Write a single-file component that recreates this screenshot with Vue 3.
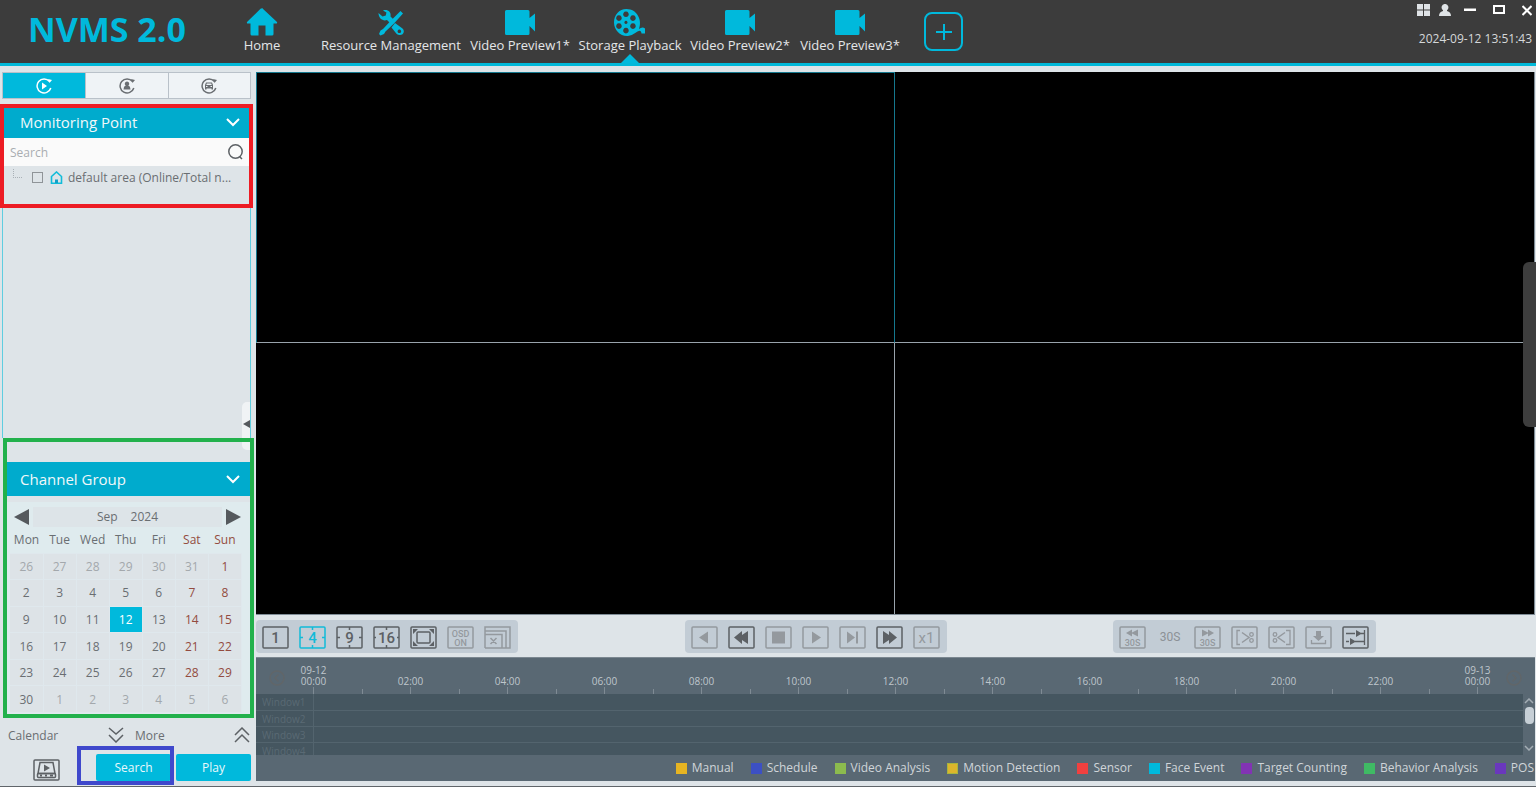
<script setup>
import { ref } from 'vue'

const previews = [
  { label: 'Video Preview1*', icon: 'camera' },
  { label: 'Storage Playback', icon: 'reel' },
  { label: 'Video Preview2*', icon: 'camera' },
  { label: 'Video Preview3*', icon: 'camera' },
]
const weekdays = ['Mon', 'Tue', 'Wed', 'Thu', 'Fri', 'Sat', 'Sun']
const selected = ref(12)
const weeks = Array.from({ length: 6 }, (_, w) =>
  Array.from({ length: 7 }, (_, d) => {
    const n = w * 7 + d - 5
    if (n < 1) return { day: n + 31, other: true }
    if (n > 30) return { day: n - 30, other: true }
    return { day: n, other: false }
  })
)
const ticks = Array.from({ length: 25 }, (_, h) => ({
  major: h % 2 === 0,
  date: h === 0 ? '09-12' : h === 24 ? '09-13' : '',
  label: h % 2 === 0 ? String(h % 24).padStart(2, '0') + ':00' : '',
}))
const tracks = ['Window1', 'Window2', 'Window3', 'Window4']
const legend = [
  { label: 'Manual', cls: 'manual' },
  { label: 'Schedule', cls: 'schedule' },
  { label: 'Video Analysis', cls: 'analysis' },
  { label: 'Motion Detection', cls: 'motion' },
  { label: 'Sensor', cls: 'sensor' },
  { label: 'Face Event', cls: 'face' },
  { label: 'Target Counting', cls: 'target' },
  { label: 'Behavior Analysis', cls: 'behavior' },
  { label: 'POS', cls: 'pos' },
]
</script>

<template>
  <div class="app">
    <header class="top">
      <h1 class="logo">NVMS 2.0</h1>
      <nav class="nav">
        <a href="#" class="nav-item">
          <svg width="30" height="28" viewBox="0 0 30 28"><path d="M15 0 30 14q.5 1.500-1 1.500h-2.500V26q0 1.500-1.500 1.500h-6.500v-10h-7v10H5q-1.500 0-1.500-1.500V15.500H1Q-.5 15.500 0 14L13.500.8Q15-.5 16.500.8z" /></svg>
          <span>Home</span>
        </a>
        <a href="#" class="nav-item wide">
          <svg width="28" height="28" viewBox="0 0 28 28">
            <path d="M6 2.500c4.500-1.500 8.500 1.500 7.500 6l4 4-3.500 3.500-4-4C6 13.500 1.500 10.500 1.500 5l4 3.500 3.300-1 .6-3z" />
            <path d="m23.500 3 2.500 2.500-9 10-8.500 8-1.500 2.500-3.500 1.500L2 26l1.500-3.500L6 21l8-8.500z" />
            <path fill-rule="evenodd" d="m18 15 7.500 5.500c3 3 .5 7-3 6.500-2 0-3-1-4-2.500l-4-5zM22.300 21.500a1.800 1.800 0 1 0 .1 0z" />
          </svg>
          <span>Resource Management</span>
        </a>
        <a v-for="p in previews" :key="p.label" href="#" class="nav-item" :class="{ active: p.icon === 'reel' }">
          <svg v-if="p.icon === 'camera'" width="30" height="28" viewBox="0 0 30 28"><path d="M1.500 2H23q1.500 0 1.500 1.500V10L30 5.500v18L24.500 18v7.500q0 1.500-1.500 1.500H1.500Q0 27 0 25.500v-22Q0 2 1.500 2z" /></svg>
          <svg v-else width="30" height="28" viewBox="0 0 30 28">
            <path fill-rule="evenodd" d="M11.500 1C4 1-1 7-1 14.500S5 28 12 28h1q4-.5 8-3.500c3-2 5-3 5.500 1H30v-5c-2-1.500-4-1-6 .5 3.500-9-2-20-12.500-20zM11 3.500a2.800 2.800 0 1 1-.1 0zM4 7.300a2.800 2.800 0 1 1-.1 0zM18 7.300a2.800 2.800 0 1 1-.1 0zM4 15.300a2.800 2.800 0 1 1-.1 0zM18 15.300a2.800 2.800 0 1 1-.1 0zM11 19.800a2.800 2.800 0 1 1-.1 0zM11 12.800a1.600 1.600 0 1 1-.1 0z" />
          </svg>
          <span>{{ p.label }}</span>
        </a>
      </nav>
      <button class="add" aria-label="Add view">
        <svg width="16" height="16" viewBox="0 0 16 16"><path d="M8 0v16M0 8h16" /></svg>
      </button>
      <div class="system">
        <div class="controls">
          <button aria-label="Layout"><svg width="13" height="12" viewBox="0 0 13 12"><path fill="#dfe3e6" d="M0 0h6v5.500H0zM7 0h6v5.500H7zM0 6.500h6V12H0zM7 6.500h6V12H7z" /></svg></button>
          <button aria-label="User"><svg width="12" height="12" viewBox="0 0 12 12"><path fill="#dfe3e6" d="M6 0a3.200 3.400 0 0 1 2 6.200V7q4 1 4 5H0q0-4 4-5v-.8A3.200 3.400 0 0 1 6 0z" /></svg></button>
          <button aria-label="Minimize"><svg width="12" height="12" viewBox="0 0 12 12"><path fill="#fff" d="M0 4.500h12v2.500H0z" /></svg></button>
          <button aria-label="Maximize"><svg width="12" height="12" viewBox="0 0 12 12"><path fill="none" stroke="#fff" stroke-width="2" d="M1 2h10v7H1z" /></svg></button>
          <button aria-label="Close"><svg width="10" height="12" viewBox="0 0 10 12"><path fill="none" stroke="#fff" stroke-width="2" d="m.5 2 9 9m0-9-9 9" /></svg></button>
        </div>
        <time>2024-09-12 13:51:43</time>
      </div>
    </header>

    <div class="body">
      <aside class="side">
        <div class="tabs">
          <button class="tab on" aria-label="Playback by channel">
            <svg width="16" height="16" viewBox="0 0 16 16"><path class="ring" d="M14.800 10A7 7 0 1 1 13.500 3.500" /><path class="fill" d="m12 1 4 1-2.500 3zM6 4.500l5 3.500-5 3.500z" /></svg>
          </button>
          <button class="tab" aria-label="Playback by face">
            <svg width="16" height="16" viewBox="0 0 16 16"><path class="ring" d="M14.800 10A7 7 0 1 1 13.500 3.500" /><path class="fill" d="m12 1 4 1-2.500 3zM8 3.500a2.200 2.200 0 0 1 1.300 4q2.200.7 2.200 4h-7q0-3.300 2.200-4a2.200 2.200 0 0 1 1.300-4z" /></svg>
          </button>
          <button class="tab" aria-label="Playback by vehicle">
            <svg width="16" height="16" viewBox="0 0 16 16"><path class="ring" d="M14.800 10A7 7 0 1 1 13.500 3.500" /><path class="fill" fill-rule="evenodd" d="m12 1 4 1-2.500 3zM5 4.500h6l1 2.500v4.500h-1.500v-1h-5v1H4V7zM5.800 5.500l-.5 1.500h5.400l-.5-1.500zM5 8h1.500v1H5zM9.500 8H11v1H9.500z" /></svg>
          </button>
        </div>

        <section class="monitor">
          <button class="bar">
            <span>Monitoring Point</span>
            <svg width="14" height="9" viewBox="0 0 14 9"><path d="m1 1 6 6 6-6" /></svg>
          </button>
          <div class="search">
            <input type="text" placeholder="Search" aria-label="Search monitoring points" />
            <button aria-label="Search">
              <svg width="16" height="16" viewBox="0 0 16 16"><circle cx="7.500" cy="7.500" r="6.700" /><path d="m11.500 12.500 2.500 2.500" /></svg>
            </button>
          </div>
          <div class="tree">
            <i class="branch"></i>
            <input id="area" type="checkbox" />
            <svg width="13" height="13" viewBox="0 0 13 13"><path fill="none" stroke="#12bcd9" stroke-width="1.600" d="M1.500 5.500v6.700h10V5.500L6.500 1z" /><path fill="#12a0c9" d="M5 12V8.500h3V12z" /></svg>
            <label for="area">default area (Online/Total n...</label>
          </div>
        </section>

        <div class="tree-space">
          <button class="collapse" aria-label="Collapse sidebar"><svg width="7" height="8" viewBox="0 0 7 8"><path d="M0 4 7 0v8z" /></svg></button>
        </div>

        <section class="channel">
          <button class="bar">
            <span>Channel Group</span>
            <svg width="14" height="9" viewBox="0 0 14 9"><path d="m1 1 6 6 6-6" /></svg>
          </button>
          <div class="calendar">
            <div class="month">
              <button aria-label="Previous month"><svg width="15" height="16" viewBox="0 0 15 16"><path d="M0 8 15 0v16z" /></svg></button>
              <div class="title"><span>Sep</span><span>2024</span></div>
              <button aria-label="Next month"><svg width="15" height="16" viewBox="0 0 15 16"><path d="M15 8 0 0v16z" /></svg></button>
            </div>
            <table>
              <thead>
                <tr><th v-for="(w, i) in weekdays" :key="w" :class="{ weekend: i > 4 }">{{ w }}</th></tr>
              </thead>
              <tbody>
                <tr v-for="(week, wi) in weeks" :key="wi">
                  <td v-for="(c, di) in week" :key="di">
                    <button
                      :class="{ other: c.other, weekend: di > 4 && !c.other, chosen: !c.other && c.day === selected }"
                      @click="!c.other && (selected = c.day)"
                    >{{ c.day }}</button>
                  </td>
                </tr>
              </tbody>
            </table>
          </div>
        </section>

        <div class="more">
          <span class="more-cal">Calendar</span>
          <svg width="16" height="16" viewBox="0 0 16 16"><path d="m1 1 7 6 7-6M1 8l7 7 7-7" /></svg>
          <span class="more-label">More</span>
          <svg width="16" height="16" viewBox="0 0 16 16"><path d="m1 8 7-7 7 7M1 15l7-7 7 7" /></svg>
        </div>
        <div class="actions">
          <button class="disk" aria-label="Local playback">
            <svg width="27" height="22" viewBox="0 0 27 22">
              <rect x="1" y="1" width="25" height="20" rx="1" /><path d="M7 3.500h13l2 11H5z" /><rect x="4.500" y="14.500" width="18" height="4" rx="1" />
              <path class="solid" d="m11 5.500 6 3.500-6 3.500zM7 15.500h2v2H7zM12 15.500h2v2h-2zM17 15.500h3v2h-3z" />
            </svg>
          </button>
          <div class="search-wrap"><button class="primary">Search</button></div>
          <button class="primary">Play</button>
        </div>
      </aside>

      <main class="main">
        <div class="videos">
          <div class="cell current"></div>
          <div class="cell"></div>
          <div class="cell"></div>
          <div class="cell"></div>
          <i class="drawer"></i>
        </div>

        <div class="toolbar">
          <div class="group">
            <button class="tool dark" aria-label="1 window"><svg width="27" height="23" viewBox="0 0 27 23"><rect x="1" y="1" width="25" height="21" rx="1" /><text x="13.500" y="17">1</text></svg></button>
            <button class="tool cyan" aria-label="4 windows"><svg width="27" height="23" viewBox="0 0 27 23"><rect x="1" y="1" width="25" height="21" rx="1" /><path d="M13.500 1v3m0 15v3M1 11.500h3m19 0h3" /><text x="13.500" y="17">4</text></svg></button>
            <button class="tool dark" aria-label="9 windows"><svg width="27" height="23" viewBox="0 0 27 23"><rect x="1" y="1" width="25" height="21" rx="1" /><path d="M13.500 1v3m0 15v3M1 11.500h3m19 0h3" /><text x="13.500" y="17">9</text></svg></button>
            <button class="tool dark" aria-label="16 windows"><svg width="27" height="23" viewBox="0 0 27 23"><rect x="1" y="1" width="25" height="21" rx="1" /><path d="M13.500 1v3m0 15v3M1 11.500h2m21 0h2" /><text x="13.500" y="17">16</text></svg></button>
            <button class="tool dark" aria-label="Full screen"><svg width="27" height="23" viewBox="0 0 27 23"><rect x="1" y="1" width="25" height="21" rx="1" /><rect x="7" y="6" width="13" height="11" rx="1" /><path class="solid" d="M3 3h5L3 8zM24 3h-5l5 5zM3 20h5l-5-5zM24 20h-5l5-5z" /></svg></button>
            <button class="tool" aria-label="OSD on"><svg width="27" height="23" viewBox="0 0 27 23"><rect x="1" y="1" width="25" height="21" rx="1" /><text class="osd" x="13.500" y="11">OSD</text><text class="osd" x="13.500" y="20">ON</text></svg></button>
            <button class="tool" aria-label="Close all"><svg width="27" height="23" viewBox="0 0 27 23"><path d="M1 22V1h25v21h-4V5H1M1 8.500h17V22H1M22 22h-4M6.500 12l6 6m0-6-6 6" /></svg></button>
          </div>
          <div class="group">
            <button class="tool" aria-label="Reverse play"><svg width="27" height="23" viewBox="0 0 27 23"><rect x="1" y="1" width="25" height="21" rx="1" /><path class="solid" d="m8 11.500 9-6v12z" /></svg></button>
            <button class="tool dark" aria-label="Slower"><svg width="27" height="23" viewBox="0 0 27 23"><rect x="1" y="1" width="25" height="21" rx="1" /><path class="solid" d="m6 11.500 8-6.500v4l6-4v13l-6-4v4z" /></svg></button>
            <button class="tool" aria-label="Stop"><svg width="27" height="23" viewBox="0 0 27 23"><rect x="1" y="1" width="25" height="21" rx="1" /><path class="solid" d="M7 5.500h13v12H7z" /></svg></button>
            <button class="tool" aria-label="Play forward"><svg width="27" height="23" viewBox="0 0 27 23"><rect x="1" y="1" width="25" height="21" rx="1" /><path class="solid" d="m19 11.500-9-6v12z" /></svg></button>
            <button class="tool" aria-label="Next frame"><svg width="27" height="23" viewBox="0 0 27 23"><rect x="1" y="1" width="25" height="21" rx="1" /><path class="solid" d="m16 11.500-8-6v12zM17 5.500h2v12h-2z" /></svg></button>
            <button class="tool dark" aria-label="Faster"><svg width="27" height="23" viewBox="0 0 27 23"><rect x="1" y="1" width="25" height="21" rx="1" /><path class="solid" d="m21 11.500-8-6.500v4L7 5v13l6-4v4z" /></svg></button>
            <button class="tool" aria-label="Speed"><svg width="27" height="23" viewBox="0 0 27 23"><rect x="1" y="1" width="25" height="21" rx="1" /><text class="speed" x="13.500" y="17">x1</text></svg></button>
          </div>
          <div class="group">
            <button class="tool" aria-label="Back 30 seconds"><svg width="27" height="23" viewBox="0 0 27 23"><rect x="1" y="1" width="25" height="21" rx="1" /><path class="solid" d="m7 7 6-3.500v3l6-3v7l-6-3v3z" /><text class="osd" x="13.500" y="20">30S</text></svg></button>
            <span class="seconds">30S</span>
            <button class="tool" aria-label="Forward 30 seconds"><svg width="27" height="23" viewBox="0 0 27 23"><rect x="1" y="1" width="25" height="21" rx="1" /><path class="solid" d="m20 7-6-3.500v3l-6-3v7l6-3v3z" /><text class="osd" x="13.500" y="20">30S</text></svg></button>
            <button class="tool" aria-label="Clip start"><svg width="27" height="23" viewBox="0 0 27 23"><rect x="1" y="1" width="25" height="21" rx="1" /><path class="thin" d="M9 4.500H6v14h3" /><path d="m11 6.500 7 5-7 5" /><circle class="thin" cx="20.500" cy="8.500" r="1.800" /><circle class="thin" cx="20.500" cy="14.500" r="1.800" /></svg></button>
            <button class="tool" aria-label="Clip end"><svg width="27" height="23" viewBox="0 0 27 23"><rect x="1" y="1" width="25" height="21" rx="1" /><path class="thin" d="M18 4.500h4v14h-4" /><path d="m17 6.500-7 5 7 5" /><circle class="thin" cx="7" cy="8.500" r="1.800" /><circle class="thin" cx="7" cy="14.500" r="1.800" /></svg></button>
            <button class="tool" aria-label="Backup"><svg width="27" height="23" viewBox="0 0 27 23"><rect x="1" y="1" width="25" height="21" rx="1" /><path class="thin" d="M6.500 14v3.500h14V14" /><path class="solid" d="M11 5h5v5h3l-5.500 5L8 10h3z" /></svg></button>
            <button class="tool dark" aria-label="Synchronize"><svg width="27" height="23" viewBox="0 0 27 23"><rect x="1" y="1" width="25" height="21" rx="1" /><path class="thin" d="M4 7.500h9m6 0h3M4 15.500h3m6 0h9M22.500 4v15" /><path class="solid" d="m20 7.500-6-3.500v7zM14 15.500 8 12v7z" /></svg></button>
          </div>
        </div>

        <section class="timeline">
          <div class="scale">
            <svg class="round" width="16" height="16" viewBox="0 0 16 16"><circle cx="8" cy="8" r="7" /><path d="M9.500 4.500 6 8l3.500 3.500" /></svg>
            <div class="ticks">
              <div v-for="(t, i) in ticks" :key="i" class="tick" :class="{ major: t.major }">
                <span v-if="t.date">{{ t.date }}</span>
                <span v-if="t.label">{{ t.label }}</span>
                <i></i>
              </div>
            </div>
            <svg class="round" width="16" height="16" viewBox="0 0 16 16"><circle cx="8" cy="8" r="7" /><path d="M6.500 4.500 10 8l-3.500 3.500" /></svg>
          </div>
          <div class="lanes">
            <div class="tracks">
              <div v-for="t in tracks" :key="t" class="track"><span>{{ t }}</span></div>
            </div>
            <div class="scroll">
              <svg width="10" height="6" viewBox="0 0 10 6"><path d="m1 5 4-4 4 4" /></svg>
              <i></i>
              <svg width="10" height="6" viewBox="0 0 10 6"><path d="m1 1 4 4 4-4" /></svg>
            </div>
          </div>
          <ul class="legend">
            <li v-for="l in legend" :key="l.label"><i :class="l.cls"></i>{{ l.label }}</li>
          </ul>
        </section>
      </main>
    </div>
  </div>
</template>

<style>
body {
  margin: 0;
  background: #dee4e8;
}
</style>

<style scoped>
* {
  box-sizing: border-box;
}
.app {
  display: flex;
  flex-direction: column;
  min-height: 100vh;
  border-bottom: 1px solid #60656a;
  background: #dee4e8;
  color: #6a6e72;
  font-family: "Open Sans", "Noto Sans", sans-serif;
  font-size: 13px;
}
button {
  display: flex;
  align-items: center;
  justify-content: center;
  margin: 0;
  padding: 0;
  border: 0;
  background: none;
  color: inherit;
  font: inherit;
}
svg {
  flex: none;
}

/* header */
.top {
  display: flex;
  height: 66px;
  border-bottom: 3px solid #00b9d9;
  background: #3c3c3c;
}
.logo {
  width: 207px;
  margin: 0;
  padding-left: 28px;
  color: #00b9dc;
  font-size: 34px;
  line-height: 58px;
  font-weight: 700;
  white-space: nowrap;
}
.nav {
  display: flex;
}
.nav-item {
  position: relative;
  display: flex;
  flex-direction: column;
  align-items: center;
  width: 110px;
  padding-top: 8px;
  color: #e4e6e8;
  font-size: 13px;
  line-height: 18px;
  text-decoration: none;
  white-space: nowrap;
}
.nav-item.wide {
  width: 148px;
}
.nav-item svg {
  fill: #00b9dc;
  overflow: visible;
}
.nav-item.active::after {
  content: "";
  position: absolute;
  bottom: 0;
  border: 9px solid transparent;
  border-top: 0;
  border-bottom-color: #00b9dc;
}
.add {
  width: 39px;
  height: 39px;
  margin: 12px 0 0 19px;
  border: 2px solid #00b9dc;
  border-radius: 8px;
}
.add svg {
  stroke: #00b9dc;
  stroke-width: 2;
}
.system {
  display: flex;
  flex-direction: column;
  align-items: flex-end;
  margin-left: auto;
  padding: 4px 4px 0 0;
  color: #d5d8da;
  font-size: 12px;
}
.controls {
  display: flex;
  gap: 17px;
}
.controls button:first-child {
  margin-right: -8px;
}
.controls button:nth-child(2) {
  margin-right: -4px;
}
.system time {
  margin-top: 14px;
  line-height: 18px;
}

/* body */
.body {
  display: flex;
  flex: 1;
  padding-bottom: 5px;
}
.side {
  display: flex;
  flex-direction: column;
  width: 256px;
  flex: none;
  padding-top: 6px;
}
.tabs {
  display: grid;
  grid-template-columns: repeat(3, 1fr);
  height: 27px;
  margin: 0 5px 5px 2px;
  border: 1px solid #b9c1c9;
  background: #eff3f6;
}
.tab + .tab {
  border-left: 1px solid #b9c1c9;
}
.tab.on {
  background: #00b9dc;
  color: #fff;
}
.tab .ring {
  fill: none;
  stroke: currentColor;
  stroke-width: 1.500;
}
.tab .fill {
  fill: currentColor;
}
.bar {
  display: flex;
  justify-content: space-between;
  width: 100%;
  height: 30px;
  padding: 0 9px 2px 16px;
  background: #00abcd;
  color: #f0f8fa;
  font-size: 15px;
}
.bar svg {
  fill: none;
  stroke: #fff;
  stroke-width: 2;
}
.monitor {
  height: 104px;
  margin-right: 3px;
  border: 4px solid #ed1c24;
}
.search {
  display: flex;
  height: 28px;
  background: #fafafa;
}
.search input {
  flex: 1;
  min-width: 0;
  padding: 0 6px;
  border: 0;
  outline: 0;
  background: none;
  color: #6a6e72;
  font: inherit;
  font-size: 12px;
}
.search input::placeholder {
  color: #a9adb1;
  opacity: 1;
}
.search button {
  width: 26px;
}
.search svg {
  fill: none;
  stroke: #5d6165;
  stroke-width: 1.500;
}
.tree {
  display: flex;
  align-items: center;
  height: 22px;
  padding-left: 9px;
}
.tree .branch {
  width: 9px;
  height: 9px;
  margin: 0 10px 8px 0;
  border: dotted #a9b0b6;
  border-width: 0 0 1px 1px;
}
.tree input {
  width: 11px;
  height: 11px;
  margin: 0 7px 0 0;
  border: 1px solid #8f9498;
  appearance: none;
}
.tree label {
  margin-left: 5px;
  font-size: 12px;
  white-space: nowrap;
}
.tree-space {
  display: flex;
  flex: 1;
  align-items: flex-end;
  justify-content: flex-end;
  margin: 0 5px 0 2px;
  border: solid #5fcde0;
  border-width: 0 1px;
}
.collapse {
  width: 8px;
  height: 48px;
  margin-bottom: -12px;
  padding-bottom: 4px;
  border-radius: 5px 0 0 5px;
  background: #f0f3f5;
}
.collapse svg {
  fill: #55595d;
}
.channel {
  margin: 0 2px 0 3px;
  padding-top: 20px;
  border: 4px solid #22b14c;
}
.channel .bar {
  height: 34px;
  padding: 0 10px 0 13px;
}
.calendar {
  height: 212px;
  margin-top: 6px;
  padding: 5px 5px 0 3px;
  background: #dfebee;
}
.month {
  display: flex;
  align-items: center;
  height: 20px;
  padding: 0 4px;
}
.month svg {
  fill: #55595d;
}
.month .title {
  display: flex;
  flex: 1;
  justify-content: center;
  gap: 13px;
  margin: 0 4px;
  background: #dde4e8;
  font-size: 12px;
  line-height: 20px;
}
table {
  width: 232px;
  height: 186px;
  border-collapse: collapse;
  table-layout: fixed;
  font-size: 12px;
}
th,
td {
  height: 26px;
  padding: 0;
  font-weight: 400;
  text-align: center;
}
td {
  border: 1px solid #dfe8ed;
  border-left: 0;
  background: #dde3e7;
}
td button {
  width: 100%;
  height: 25px;
}
.weekend {
  color: #934b40;
}
.other {
  color: #a3a8ac;
}
.chosen {
  background: #00b9dc;
  color: #fff;
}
.more {
  display: flex;
  align-items: center;
  height: 34px;
  padding: 0 6px 0 8px;
  font-size: 12px;
}
.more svg {
  fill: none;
  stroke: #5d6165;
  stroke-width: 1.500;
}
.more-cal {
  width: 100px;
}
.more-label {
  flex: 1;
  margin-left: 11px;
}
.actions {
  display: flex;
  align-items: flex-end;
  height: 29px;
  padding-right: 5px;
}
.disk {
  width: 27px;
  margin: 0 36px 0 33px;
}
.disk svg {
  fill: none;
  stroke: #5d6165;
  stroke-width: 1.500;
}
.disk .solid {
  fill: #5d6165;
  stroke: none;
}
.search-wrap {
  position: relative;
  flex: 1;
  margin-right: 5px;
}
.search-wrap::after {
  content: "";
  position: absolute;
  inset: -8px -3px -4px -19px;
  border: 4px solid #3f48cc;
  pointer-events: none;
}
.search-wrap .primary {
  width: 100%;
}
.primary {
  width: 75px;
  height: 27px;
  border-radius: 2px;
  background: #00b9dc;
  color: #e9f8fb;
  font-size: 12px;
}

/* main */
.main {
  display: flex;
  flex-direction: column;
  flex: 1;
  min-width: 0;
  padding: 6px 1px 0 0;
}
.videos {
  position: relative;
  display: grid;
  grid-template: 1fr 1fr / 1fr 1fr;
  flex: 1;
  border: 1px solid #7f8c96;
  border-width: 0 1px 1px 0;
  background: #000;
}
.cell {
  border: solid #99a3ab;
  border-width: 0 1px 1px 0;
}
.cell:nth-child(2n) {
  border-right: 0;
}
.cell:nth-child(n + 3) {
  border-bottom: 0;
}
.cell.current {
  border-width: 1px;
  border-color: #15788e #15788e #99a3ab #15788e;
}
.drawer {
  position: absolute;
  top: 35%;
  right: -2px;
  width: 13px;
  height: 165px;
  border-radius: 6px 0 0 6px;
  background: #3d3d3d;
}
.toolbar {
  display: flex;
  align-items: center;
  justify-content: space-between;
  height: 42px;
  padding-right: 159px;
}
.group {
  display: flex;
  align-items: center;
  gap: 10px;
  height: 33px;
  padding: 2px 7px 0 6px;
  border-radius: 4px;
  background: #c2ccd5;
}
.tool {
  color: #94999e;
}
.tool.dark {
  color: #5c6064;
}
.tool.cyan {
  color: #12bad8;
}
.tool svg {
  fill: none;
  stroke: currentColor;
  stroke-width: 1.500;
}
.tool .thin {
  stroke-width: 1.300;
}
.tool .solid {
  fill: currentColor;
  stroke: none;
}
.tool text {
  fill: currentColor;
  stroke: none;
  font-family: Roboto, sans-serif;
  font-size: 15px;
  font-weight: 500;
  text-anchor: middle;
}
.tool text.osd {
  font-size: 9px;
}
.tool text.speed {
  font-weight: 400;
}
.seconds {
  width: 28px;
  color: #8c9196;
  font-family: Roboto, sans-serif;
  font-size: 12px;
  text-align: center;
}

/* timeline */
.timeline {
  overflow: hidden;
  background: #596873;
  border-top: 1px solid #7b8790;
}
.scale {
  display: flex;
  height: 36px;
}
.round {
  margin: 12px 13px 0 13px;
  fill: none;
  stroke: #616669;
  stroke-width: 1.500;
}
.ticks {
  display: flex;
  flex: 1;
  justify-content: space-between;
  padding: 0 15px;
}
.tick {
  display: flex;
  flex-direction: column;
  align-items: center;
  justify-content: flex-end;
  width: 1px;
  color: #bfc6cc;
  font-size: 10px;
  line-height: 11px;
  white-space: nowrap;
}
.tick i {
  width: 1px;
  height: 5px;
  background: #7f8b94;
}
.tick.major i {
  height: 7px;
}
.lanes {
  display: flex;
  height: 61px;
}
.tracks {
  flex: 1;
  overflow: hidden;
}
.track {
  height: 17px;
  border-bottom: 1px solid #53646e;
  background: #455660;
}
.track + .track {
  height: 16px;
}
.track span {
  display: block;
  width: 58px;
  height: 16px;
  padding-left: 6px;
  border-right: 1px solid #53646e;
  color: #5a6a74;
  font-size: 10px;
  line-height: 16px;
}
.scroll {
  display: flex;
  flex-direction: column;
  align-items: center;
  width: 12px;
  padding: 4px 0;
}
.scroll svg {
  fill: none;
  stroke: #a3adb4;
  stroke-width: 1.500;
}
.scroll i {
  width: 9px;
  height: 17px;
  margin: 3px 0 auto;
  border-radius: 4px;
  background: #c6cfd6;
}
.legend {
  display: flex;
  justify-content: flex-end;
  gap: 17px;
  margin: 0;
  padding: 0 1px 0 0;
  height: 26px;
  list-style: none;
  color: #d0d5d9;
  font-size: 12px;
  line-height: 26px;
  white-space: nowrap;
}
.legend li {
  display: flex;
  align-items: center;
  gap: 5px;
}
.legend i {
  width: 11px;
  height: 11px;
}
.manual { background: #e6b422; }
.schedule { background: #3c50c4; }
.analysis { background: #8cbb4e; }
.motion { border: 1px solid #a9b53c; background: #dcb52c; }
.sensor { background: #f0403f; }
.face { background: #00b9dc; }
.target { background: #8233b4; }
.behavior { background: #3fba64; }
.pos { background: #6a38bd; }
</style>
